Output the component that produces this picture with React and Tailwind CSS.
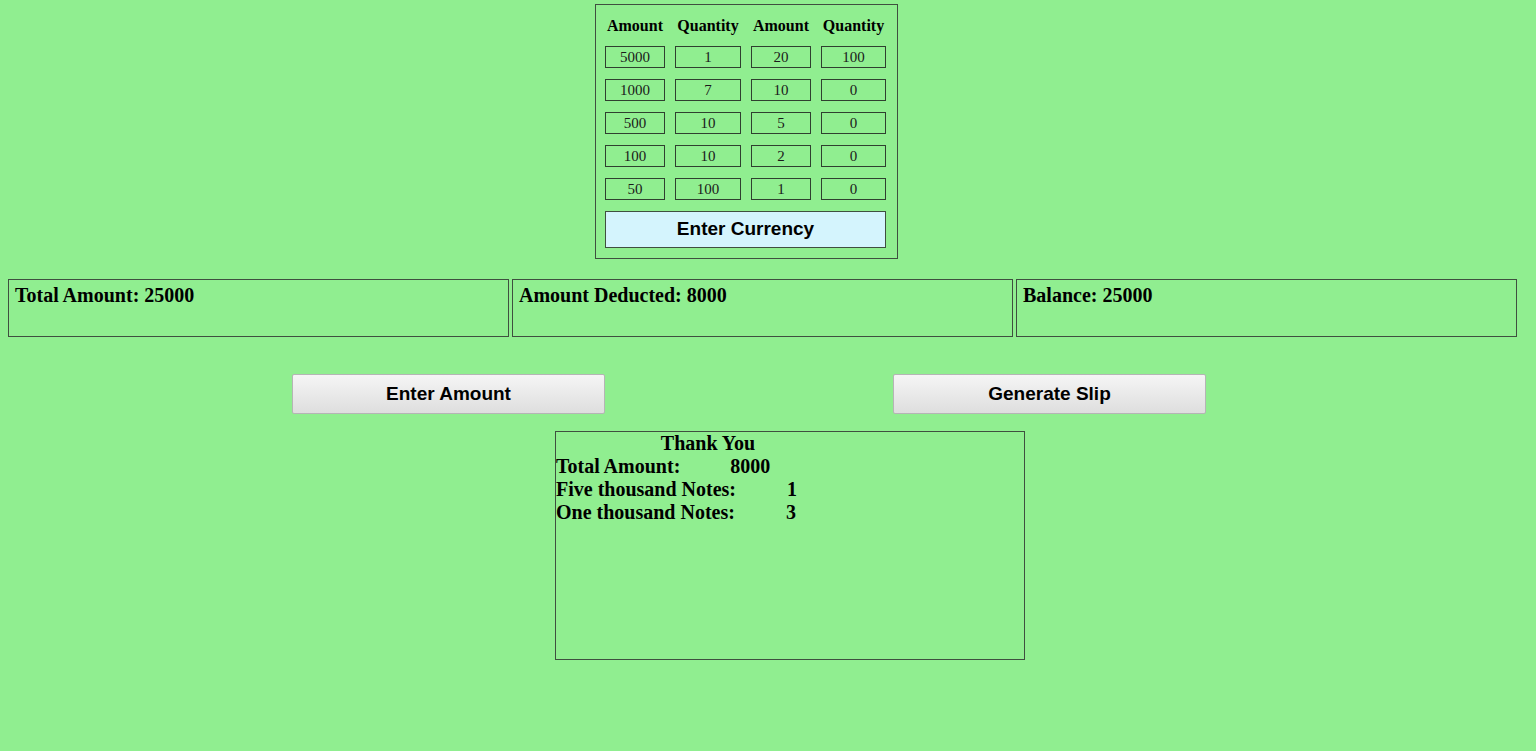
import React from "react";

const rows = [
  ["5000", "1", "20", "100"],
  ["1000", "7", "10", "0"],
  ["500", "10", "5", "0"],
  ["100", "10", "2", "0"],
  ["50", "100", "1", "0"],
];

const serif = "font-['Liberation_Serif',serif]";
const sans = "font-['Liberation_Sans',Arial,sans-serif]";

const StatBox = ({ children }) => (
  <div className={`w-[501px] h-[58px] border border-[#3f4f3f] px-[6px] text-[20px] font-bold leading-[31px] text-black ${serif}`}>
    {children}
  </div>
);

const GrayButton = ({ children }) => (
  <button className={`w-[313px] h-[40px] border border-[#b5b5b5] rounded-[2px] bg-gradient-to-b from-[#f5f5f5] to-[#dedede] text-[19px] font-bold text-black ${sans}`}>
    {children}
  </button>
);

export default function App() {
  return (
    <div className="min-h-[751px] bg-[#90ee90] pt-[4px]">
      {/* currency table */}
      <div className="ml-[595px] w-[303px] border border-[#3f4f3f] px-[9px] pt-[11px] pb-[10px]">
        <div className={`grid grid-cols-[60px_66px_60px_65px] gap-x-[10px] gap-y-[10px] ${serif}`}>
          {["Amount", "Quantity", "Amount", "Quantity"].map((h, i) => (
            <div key={i} className="h-[20px] whitespace-nowrap text-center text-[16px] font-bold leading-[20px] text-black">
              {h}
            </div>
          ))}
          {rows.flat().map((v, i) => (
            <input
              key={i}
              defaultValue={v}
              className="mb-[1px] h-[22px] w-full border border-[#2f3f2f] bg-transparent text-center text-[15px] text-[#1a1a1a] outline-none"
            />
          ))}
        </div>
        <button className={`mt-[10px] h-[37px] w-[281px] border border-[#3f4f3f] bg-[#d4f4fd] text-[19px] font-bold text-black ${sans}`}>
          Enter Currency
        </button>
      </div>

      {/* totals */}
      <div className="mt-[20px] ml-[8px] flex gap-[3px]">
        <StatBox>Total Amount: 25000</StatBox>
        <StatBox>Amount Deducted: 8000</StatBox>
        <StatBox>Balance: 25000</StatBox>
      </div>

      {/* actions */}
      <div className="mt-[37px] ml-[292px] flex gap-[288px]">
        <GrayButton>Enter Amount</GrayButton>
        <GrayButton>Generate Slip</GrayButton>
      </div>

      {/* slip */}
      <div className={`mt-[17px] ml-[555px] h-[229px] w-[470px] border border-[#3f4f3f] text-[20px] font-bold leading-[23px] text-black ${serif}`}>
        <div className="w-[304px] text-center">Thank You</div>
        <div className="flex">
          <span>Total Amount:</span>
          <span className="ml-[50px]">8000</span>
        </div>
        <div className="flex">
          <span>Five thousand Notes:</span>
          <span className="ml-[51px]">1</span>
        </div>
        <div className="flex">
          <span>One thousand Notes:</span>
          <span className="ml-[51px]">3</span>
        </div>
      </div>
    </div>
  );
}
